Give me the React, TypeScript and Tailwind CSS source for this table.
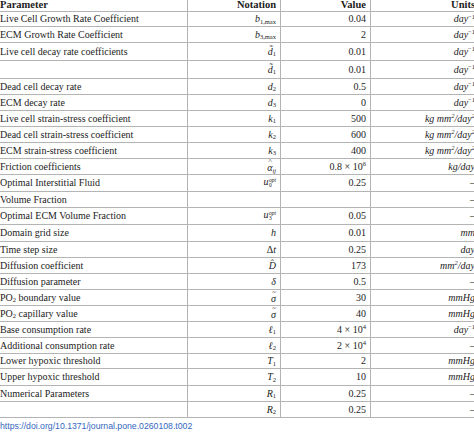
import React from "react";

const I = ({ children }: { children: React.ReactNode }) => <i className="italic">{children}</i>;
const Sb = ({ children }: { children: React.ReactNode }) => (
  <sub className="text-[6.5px] not-italic relative -bottom-[1.8px]">{children}</sub>
);
const Sp = ({ children }: { children: React.ReactNode }) => (
  <sup className="text-[6.5px]">{children}</sup>
);
const Acc = ({ a, c }: { a: string; c: string }) => (
  <span className="inline-flex flex-col items-center align-bottom leading-none italic">
    <span className="text-[7px] not-italic leading-[3px] h-[3px] pl-[1px]">{a}</span>
    <span>{c}</span>
  </span>
);
const Opt = ({ s }: { s: string }) => (
  <>
    <I>u</I>
    <span className="inline-flex flex-col leading-none text-[5.5px] align-middle ml-[0.5px] -translate-y-[0.5px]">
      <i>opt</i>
      <span>{s}</span>
    </span>
  </>
);

const dayInv = (
  <>
    <I>day</I>
    <Sp>−1</Sp>
  </>
);
const kgmm = (
  <I>
    kg mm<Sp>2</Sp>/day<Sp>2</Sp>
  </I>
);
const dash = <span>–</span>;
const mmHg = <I>mmHg</I>;

type Row = { p: React.ReactNode; n: React.ReactNode; v: React.ReactNode; u: React.ReactNode; h: string };

const rows: Row[] = [
  { p: "Live Cell Growth Rate Coefficient", n: <><I>b</I><Sb>1,max</Sb></>, v: "0.04", u: dayInv, h: "h-[15px]" },
  { p: "ECM Growth Rate Coefficient", n: <><I>b</I><Sb>3,max</Sb></>, v: "2", u: dayInv, h: "h-[16px]" },
  { p: "Live cell decay rate coefficients", n: <><I>d̃</I><Sb>1</Sb></>, v: "0.01", u: dayInv, h: "h-[18px]" },
  { p: "", n: <><I>d̃</I><Sb>1</Sb></>, v: "0.01", u: dayInv, h: "h-[18px]" },
  { p: "Dead cell decay rate", n: <><I>d</I><Sb>2</Sb></>, v: "0.5", u: dayInv, h: "h-[16px]" },
  { p: "ECM decay rate", n: <><I>d</I><Sb>3</Sb></>, v: "0", u: dayInv, h: "h-[16px]" },
  { p: "Live cell strain-stress coefficient", n: <><I>k</I><Sb>1</Sb></>, v: "500", u: kgmm, h: "h-[16px]" },
  { p: "Dead cell strain-stress coefficient", n: <><I>k</I><Sb>2</Sb></>, v: "600", u: kgmm, h: "h-[16px]" },
  { p: "ECM strain-stress coefficient", n: <><I>k</I><Sb>3</Sb></>, v: "400", u: kgmm, h: "h-[16px]" },
  { p: "Friction coefficients", n: <><Acc a="^" c="α" /><Sb><i>ij</i></Sb></>, v: <>0.8 × 10<Sp>6</Sp></>, u: <I>kg/day</I>, h: "h-[16px]" },
  { p: "Optimal Interstitial Fluid", n: <Opt s="0" />, v: "0.25", u: dash, h: "h-[17px]" },
  { p: "Volume Fraction", n: "", v: "", u: dash, h: "h-[16px]" },
  { p: "Optimal ECM Volume Fraction", n: <Opt s="3" />, v: "0.05", u: dash, h: "h-[17px]" },
  { p: "Domain grid size", n: <I>h</I>, v: "0.01", u: <I>mm</I>, h: "h-[17px]" },
  { p: "Time step size", n: <>Δ<I>t</I></>, v: "0.25", u: <I>day</I>, h: "h-[16px]" },
  { p: "Diffusion coefficient", n: <I>D̂</I>, v: "173", u: <I>mm<Sp>2</Sp>/day</I>, h: "h-[16px]" },
  { p: "Diffusion parameter", n: <I>δ</I>, v: "0.5", u: dash, h: "h-[16px]" },
  { p: <>PO<Sb>2</Sb> boundary value</>, n: <Acc a="~" c="σ" />, v: "30", u: mmHg, h: "h-[16px]" },
  { p: <>PO<Sb>2</Sb> capillary value</>, n: <Acc a="~" c="σ" />, v: "40", u: mmHg, h: "h-[16px]" },
  { p: "Base consumption rate", n: <><I>ℓ</I><Sb>1</Sb></>, v: <>4 × 10<Sp>4</Sp></>, u: dayInv, h: "h-[16px]" },
  { p: "Additional consumption rate", n: <><I>ℓ</I><Sb>2</Sb></>, v: <>2 × 10<Sp>4</Sp></>, u: dash, h: "h-[16px]" },
  { p: "Lower hypoxic threshold", n: <><I>T</I><Sb>1</Sb></>, v: "2", u: mmHg, h: "h-[15px]" },
  { p: "Upper hypoxic threshold", n: <><I>T</I><Sb>2</Sb></>, v: "10", u: mmHg, h: "h-[17px]" },
  { p: "Numerical Parameters", n: <><I>R</I><Sb>1</Sb></>, v: "0.25", u: dash, h: "h-[16px]" },
  { p: "", n: <><I>R</I><Sb>2</Sb></>, v: "0.25", u: dash, h: "h-[16px]" },
];

const grid = "grid grid-cols-[187px_93px_90px_108px] border-b border-[#b4b4b4]";
const c1 = "flex items-center pl-0 leading-none whitespace-nowrap";
const c2 = "flex items-center justify-end pr-[4px] border-l border-[#b4b4b4] leading-none whitespace-nowrap";
const c4 = "flex items-center justify-end pr-[3px] border-l border-[#b4b4b4] leading-none whitespace-nowrap";

export default function App() {
  return (
    <div className="w-[474px] h-[433px] overflow-hidden bg-white text-[#1c1c1c]">
      <div className="w-[478px] font-['Liberation_Serif',serif] text-[10px]">
        <div className={`${grid} h-[12px] font-bold text-[10.5px]`}>
          <div className={c1}><span>Parameter</span></div>
          <div className={c2}><span>Notation</span></div>
          <div className={c2}><span>Value</span></div>
          <div className={c4}><span>Units</span></div>
        </div>
        {rows.map((r, i) => (
          <div key={i} className={`${grid} ${r.h}`}>
            <div className={c1}><span>{r.p}</span></div>
            <div className={c2}><span>{r.n}</span></div>
            <div className={c2}><span>{r.v}</span></div>
            <div className={c4}><span>{r.u}</span></div>
          </div>
        ))}
      </div>
      <div className="mt-[3px] font-['Liberation_Sans',sans-serif] text-[8.7px] leading-[10px] text-[#3467c0]">
        https://doi.org/10.1371/journal.pone.0260108.t002
      </div>
    </div>
  );
}
